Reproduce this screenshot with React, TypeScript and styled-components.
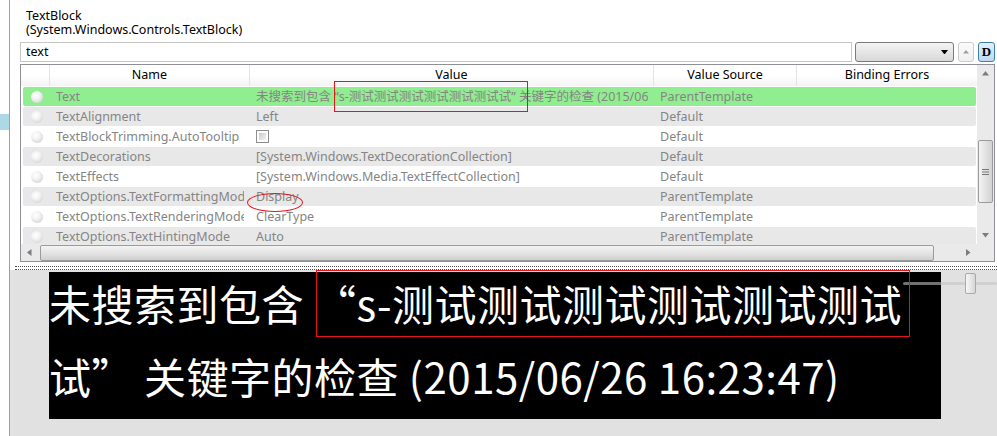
import React from 'react';
import styled, { createGlobalStyle } from 'styled-components';

const GlobalStyle = createGlobalStyle`
  html, body { margin: 0; padding: 0; background: #fff; }
  body {
    font-family: "Noto Sans", "Noto Sans CJK SC", sans-serif;
    font-size: 12.5px;
  }
  * { box-sizing: border-box; }
`;

const Root = styled.div`
  position: relative;
  display: flex;
  width: 997px;
  height: 436px;
  overflow: hidden;
  background: #fff;
`;

const LeftPane = styled.div`
  flex: none;
  width: 10px;
  border-right: 1px solid #a0a0a0;
  background: #fff;
  padding-top: 114px;
`;

const TreeSelection = styled.div`
  height: 16px;
  background: #add8e6;
`;

const Main = styled.div`
  flex: 1;
  min-width: 0;
  display: flex;
  flex-direction: column;
`;

const TopSection = styled.div`
  display: flex;
  flex-direction: column;
  padding: 9px 2px 4px 10px;
  background: #fff;
`;

const Title = styled.div`
  padding-left: 6px;
  line-height: 14px;
  color: #000;
`;

const Toolbar = styled.div`
  display: flex;
  align-items: stretch;
  height: 20px;
  margin-top: 5px;
`;

const SearchBox = styled.div`
  flex: 1;
  border: 1px solid #c6c6c6;
  background: #fff;
  padding-left: 5px;
  line-height: 18px;
  color: #000;
`;

const ComboBox = styled.div`
  width: 99px;
  margin-left: 3px;
  border: 1px solid #7a7a7a;
  border-radius: 3px;
  background: linear-gradient(#f4f4f4, #e6e6e6 50%, #d9d9d9);
  display: flex;
  align-items: center;
  justify-content: flex-end;
  padding-right: 5px;
`;

const SmallButton = styled.div<{ $active?: boolean }>`
  width: ${(p) => (p.$active ? 17 : 16)}px;
  margin-left: 4px;
  border-radius: 3px;
  border: 1px solid ${(p) => (p.$active ? '#3c7fb1' : '#cccccc')};
  background: ${(p) =>
    p.$active ? 'linear-gradient(#e4f0fc, #bcd8f2)' : 'linear-gradient(#fbfbfb, #f0f0f0)'};
  display: flex;
  align-items: center;
  justify-content: center;
  font-family: "Liberation Serif", serif;
  font-weight: bold;
  font-size: 13px;
  color: #000;
`;

const GridFrame = styled.div`
  margin-top: 2px;
  height: 198px;
  border: 1px solid #8e9096;
  background: #fff;
  display: grid;
  grid-template-columns: 1fr 17px;
  grid-template-rows: 1fr 17px;
`;

const Table = styled.div`
  overflow: hidden;
  display: flex;
  flex-direction: column;
`;

const HeaderRow = styled.div`
  flex: none;
  height: 21px;
  display: grid;
  grid-template-columns: 28px 200px 404px 143px 1fr;
  background: linear-gradient(#ffffff, #ffffff 50%, #f3f3f4);
`;

const HeaderCell = styled.div<{ $first?: boolean }>`
  border-left: ${(p) => (p.$first ? 'none' : '1px solid #e3e4e6')};
  text-align: center;
  line-height: 20px;
  color: #000;
  white-space: nowrap;
  overflow: hidden;
`;

const Body = styled.div`
  flex: 1;
  overflow: hidden;
`;

const Row = styled.div<{ $tone: 'green' | 'gray' | 'white' }>`
  height: 19px;
  margin: 1px 1px 1px 2px;
  border-radius: 2px;
  display: grid;
  grid-template-columns: 26px 200px 404px 143px 1fr;
  align-items: center;
  background: ${(p) =>
    p.$tone === 'green' ? '#90ee90' : p.$tone === 'gray' ? '#e8e8e8' : '#ffffff'};
  color: #858585;
`;

const Dot = styled.div`
  width: 12px;
  height: 12px;
  margin-left: 8px;
  border-radius: 50%;
  background: radial-gradient(circle at 40% 35%, #ffffff 0%, #f4f4f4 35%, #d6d6d6 80%, #c9c9c9 100%);
`;

const Cell = styled.div`
  padding: 0 5px 0 7px;
  min-width: 0;
`;

const CellText = styled.div`
  overflow: hidden;
  white-space: nowrap;
  line-height: 19px;
`;

const CheckBox = styled.div`
  width: 13px;
  height: 13px;
  border: 1px solid #8f8f8f;
  background: #fff;
  padding: 2px;
  &::after {
    content: '';
    display: block;
    width: 100%;
    height: 100%;
    background: linear-gradient(135deg, #cbcbcb, #f2f2f2);
  }
`;

const VScroll = styled.div`
  background: #eaeaea;
  display: flex;
  flex-direction: column;
  align-items: center;
`;

const HScroll = styled.div`
  background: #eaeaea;
  display: flex;
  align-items: center;
`;

const ArrowBox = styled.div`
  flex: none;
  width: 17px;
  height: 17px;
  display: flex;
  align-items: center;
  justify-content: center;
`;

const VTrack = styled.div`
  flex: 1;
  width: 100%;
  padding: 58px 1px 0 1px;
`;

const VThumb = styled.div`
  height: 63px;
  border: 1px solid #9b9b9b;
  border-radius: 2px;
  background: linear-gradient(90deg, #f4f4f4, #e2e2e2 50%, #d2d2d2);
  display: flex;
  align-items: center;
  justify-content: center;
`;

const HTrack = styled.div`
  flex: 1;
  height: 100%;
  padding: 0 26px 0 2px;
  display: flex;
  align-items: center;
`;

const HThumb = styled.div`
  flex: 1;
  height: 16px;
  border: 1px solid #9b9b9b;
  border-radius: 2px;
  background: linear-gradient(#f4f4f4, #e4e4e4 50%, #cfcfcf);
`;

const Corner = styled.div`
  background: #eaeaea;
`;

const Splitter = styled.div`
  margin-left: 5px;
  height: 4px;
  border-top: 1px dotted #4a4a4a;
  border-bottom: 1px dotted #4a4a4a;
  background: #fff;
`;

const BottomArea = styled.div`
  position: relative;
  flex: 1;
  background: #e1e1e1;
  padding: 2px 0 0 39px;
`;

const PreviewBox = styled.div`
  width: 892px;
  height: 147px;
  background: #000;
  color: #fff;
  overflow: hidden;
  font-family: "Noto Sans CJK SC", "Noto Sans", sans-serif;
  font-size: 42px;
  letter-spacing: 0.5px;
  line-height: 73px;
`;

const PreviewLine = styled.div`
  white-space: nowrap;
  overflow: hidden;
  &:first-child {
    margin-top: -6px;
  }
`;

const Slider = styled.div`
  position: absolute;
  right: 0;
  top: 3px;
  width: 94px;
  height: 21px;
`;

const SliderTrack = styled.div`
  position: absolute;
  left: 0;
  right: 0;
  top: 9px;
  height: 3px;
  border-radius: 2px;
  background: rgba(196, 196, 196, 0.58);
`;

const SliderThumb = styled.div`
  position: absolute;
  left: 62px;
  top: 0;
  width: 11px;
  height: 21px;
  border: 1px solid #a9a9a9;
  border-radius: 2px;
  background: linear-gradient(90deg, #f6f6f6, #e4e4e4 60%, #d6d6d6);
`;

const Mark = styled.div<{ $x: number; $y: number; $w: number; $h: number; $round?: boolean }>`
  position: absolute;
  left: ${(p) => p.$x}px;
  top: ${(p) => p.$y}px;
  width: ${(p) => p.$w}px;
  height: ${(p) => p.$h}px;
  border: 1px solid #e8141b;
  border-radius: ${(p) => (p.$round ? '50%' : '0')};
  pointer-events: none;
`;

const Tri = ({ dir, color = '#7d7d7d', w = 7 }: { dir: 'up' | 'down' | 'left' | 'right'; color?: string; w?: number }) => {
  const h = Math.ceil(w / 2) + 0.5;
  const vertical = dir === 'up' || dir === 'down';
  const W = vertical ? w : h;
  const H = vertical ? h : w;
  const pts =
    dir === 'up'
      ? `0,${H} ${W},${H} ${W / 2},0`
      : dir === 'down'
      ? `0,0 ${W},0 ${W / 2},${H}`
      : dir === 'left'
      ? `${W},0 ${W},${H} 0,${H / 2}`
      : `0,0 0,${H} ${W},${H / 2}`;
  return (
    <svg width={W} height={H} viewBox={`0 0 ${W} ${H}`}>
      <polygon points={pts} fill={color} />
    </svg>
  );
};

const Grip = () => (
  <svg width="7" height="6" viewBox="0 0 7 6">
    <rect x="0" y="0" width="7" height="1" fill="#777" />
    <rect x="0" y="2.5" width="7" height="1" fill="#777" />
    <rect x="0" y="5" width="7" height="1" fill="#777" />
  </svg>
);

const LONG = '未搜索到包含 “s-测试测试测试测试测试测试试” 关键字的检查 (2015/06/26 16:23:47)';

type RowData = { name: string; value?: string; checkbox?: boolean; source: string };

const rows: RowData[] = [
  { name: 'Text', value: LONG, source: 'ParentTemplate' },
  { name: 'TextAlignment', value: 'Left', source: 'Default' },
  { name: 'TextBlockTrimming.AutoTooltip', checkbox: true, source: 'Default' },
  { name: 'TextDecorations', value: '[System.Windows.TextDecorationCollection]', source: 'Default' },
  { name: 'TextEffects', value: '[System.Windows.Media.TextEffectCollection]', source: 'Default' },
  { name: 'TextOptions.TextFormattingMode', value: 'Display', source: 'ParentTemplate' },
  { name: 'TextOptions.TextRenderingMode', value: 'ClearType', source: 'ParentTemplate' },
  { name: 'TextOptions.TextHintingMode', value: 'Auto', source: 'ParentTemplate' },
];

export default function App() {
  return (
    <Root>
      <GlobalStyle />
      <LeftPane>
        <TreeSelection />
      </LeftPane>
      <Main>
        <TopSection>
          <Title>
            <div>TextBlock</div>
            <div>(System.Windows.Controls.TextBlock)</div>
          </Title>
          <Toolbar>
            <SearchBox>text</SearchBox>
            <ComboBox>
              <Tri dir="down" color="#000" w={7} />
            </ComboBox>
            <SmallButton>
              <Tri dir="up" color="#9d9d9d" w={6} />
            </SmallButton>
            <SmallButton $active>D</SmallButton>
          </Toolbar>
          <GridFrame>
            <Table>
              <HeaderRow>
                <HeaderCell $first />
                <HeaderCell>Name</HeaderCell>
                <HeaderCell>Value</HeaderCell>
                <HeaderCell>Value Source</HeaderCell>
                <HeaderCell>Binding Errors</HeaderCell>
              </HeaderRow>
              <Body>
                {rows.map((r, i) => (
                  <Row key={r.name} $tone={i === 0 ? 'green' : i % 2 === 1 ? 'gray' : 'white'}>
                    <Dot />
                    <Cell>
                      <CellText>{r.name}</CellText>
                    </Cell>
                    <Cell>
                      {r.checkbox ? <CheckBox /> : <CellText>{r.value}</CellText>}
                    </Cell>
                    <Cell>
                      <CellText>{r.source}</CellText>
                    </Cell>
                    <Cell />
                  </Row>
                ))}
              </Body>
            </Table>
            <VScroll>
              <ArrowBox>
                <Tri dir="up" />
              </ArrowBox>
              <VTrack>
                <VThumb>
                  <Grip />
                </VThumb>
              </VTrack>
              <ArrowBox>
                <Tri dir="down" />
              </ArrowBox>
            </VScroll>
            <HScroll>
              <ArrowBox>
                <Tri dir="left" />
              </ArrowBox>
              <HTrack>
                <HThumb />
              </HTrack>
              <ArrowBox>
                <Tri dir="right" />
              </ArrowBox>
            </HScroll>
            <Corner />
          </GridFrame>
        </TopSection>
        <Splitter />
        <BottomArea>
          <PreviewBox>
            <PreviewLine>未搜索到包含 “s-测试测试测试测试测试测试</PreviewLine>
            <PreviewLine>试” 关键字的检查 (2015/06/26 16:23:47)</PreviewLine>
          </PreviewBox>
          <Slider>
            <SliderTrack />
            <SliderThumb />
          </Slider>
        </BottomArea>
      </Main>
      <Mark $x={334} $y={81} $w={194} $h={31} />
      <Mark $x={247} $y={193} $w={56} $h={19} $round />
      <Mark $x={316} $y={270} $w={594} $h={67} />
    </Root>
  );
}
